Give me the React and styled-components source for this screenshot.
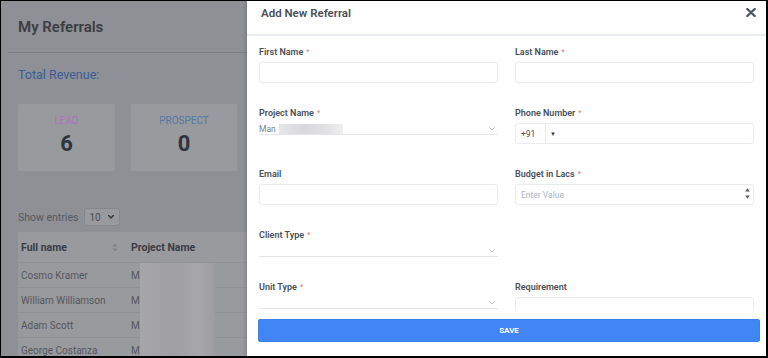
import React from "react";
import styled, { createGlobalStyle } from "styled-components";

const GlobalStyle = createGlobalStyle`
  html, body {
    margin: 0;
    padding: 0;
    background: #ffffff;
  }
  body {
    font-family: Roboto, "Noto Sans", "Liberation Sans", sans-serif;
  }
  * {
    box-sizing: border-box;
  }
`;

const Frame = styled.div`
  position: relative;
  width: 768px;
  height: 358px;
  border-style: solid;
  border-color: #000;
  border-width: 1px 2px 2px 1px;
  overflow: hidden;
`;

/* dimmed page behind the drawer */
const Page = styled.div`
  height: 100%;
  background: #8e9096;
  padding-left: 7px;
`;

const PageHeader = styled.div`
  height: 52px;
  display: flex;
  align-items: center;
  padding-left: 10px;
  border-bottom: 1px solid #7a7c81;
`;

const PageTitle = styled.h1`
  margin: 0;
  font-size: 15px;
  font-weight: 600;
  color: #3a3d44;
`;

const PageBody = styled.div`
  padding: 14px 0 0 10px;
`;

const Revenue = styled.div`
  font-size: 12.5px;
  color: #3b5c98;
  line-height: 16px;
`;

const Cards = styled.div`
  display: grid;
  grid-template-columns: 97px 106px;
  column-gap: 16px;
  margin-top: 21px;
`;

const Card = styled.div`
  height: 67px;
  background: #999a9e;
  border-radius: 2px;
  display: flex;
  flex-direction: column;
  align-items: center;
  padding-top: 11px;
`;

const CardLabel = styled.div`
  font-size: 10px;
  line-height: 12px;
  color: ${(p) => p.$color};
`;

const CardValue = styled.div`
  font-size: 22px;
  font-weight: 700;
  line-height: 26px;
  margin-top: 4px;
  color: #2e343d;
`;

const EntriesRow = styled.div`
  display: flex;
  align-items: center;
  gap: 6px;
  margin-top: 37px;
  font-size: 10.5px;
  color: #55585e;
`;

const EntriesSelect = styled.div`
  width: 36px;
  height: 18px;
  border: 1px solid #85878c;
  border-radius: 3px;
  background: #999a9e;
  display: flex;
  align-items: center;
  justify-content: space-between;
  padding: 0 5px 0 4px;
  font-size: 10px;
  color: #4a4d53;
`;

const Table = styled.div`
  margin-top: 6px;
  background: #999a9e;
`;

const TableRow = styled.div`
  display: grid;
  grid-template-columns: 110px 1fr;
  height: ${(p) => (p.$head ? "31px" : "25px")};
  align-items: center;
  border-bottom: 1px solid #909195;
  font-size: ${(p) => (p.$head ? "10.5px" : "10px")};
  font-weight: ${(p) => (p.$head ? 700 : 400)};
  color: ${(p) => (p.$head ? "#3a3d44" : "#54575d")};
`;

const Cell = styled.div`
  display: flex;
  align-items: center;
  justify-content: space-between;
  padding: 0 0 0 3px;
  white-space: nowrap;
  height: 100%;
`;

const CellText = styled.span`
  display: flex;
  align-items: center;
`;

const Redacted = styled.span`
  display: inline-block;
  width: ${(p) => p.$w}px;
  height: ${(p) => p.$h}px;
  margin-left: ${(p) => p.$ml || 0}px;
  background: ${(p) =>
    p.$light
      ? "linear-gradient(90deg, #e6e6e8, #d9d9db 40%, #e2e2e4 75%, #efeff0)"
      : "linear-gradient(90deg, #a6a6a9, #a0a0a3 45%, #a7a7aa 80%, #9d9da1)"};
`;

/* drawer */
const Drawer = styled.aside`
  position: absolute;
  top: 0;
  right: 0;
  bottom: 0;
  width: 519px;
  background: #ffffff;
  display: flex;
  flex-direction: column;
  box-shadow: -2px 0 3px rgba(0, 0, 0, 0.12);
`;

const DrawerHeader = styled.div`
  height: 35px;
  flex: none;
  display: flex;
  align-items: flex-start;
  justify-content: space-between;
  padding: 5px 10px 0 14px;
  border-bottom: 2px solid #e8ebef;
`;

const DrawerTitle = styled.h2`
  margin: 0;
  font-size: 11.5px;
  line-height: 14px;
  font-weight: 600;
  color: #495057;
`;

const CloseButton = styled.button`
  border: none;
  background: none;
  padding: 0;
  margin-top: 2px;
  display: flex;
  cursor: pointer;
`;

const DrawerBody = styled.div`
  flex: 1;
  overflow: hidden;
  padding: 10px 12px 0 12px;
`;

const FormGrid = styled.div`
  display: grid;
  grid-template-columns: 1fr 1fr;
  column-gap: 17px;
  row-gap: 24px;
  align-items: start;
`;

const Group = styled.div`
  display: flex;
  flex-direction: column;
`;

const Label = styled.label`
  font-size: 9px;
  line-height: 12px;
  font-weight: 600;
  color: #495057;
  margin-bottom: 4px;
`;

const Req = styled.span`
  color: #f07d72;
  font-size: 7px;
  margin-left: 3px;
  vertical-align: 1px;
`;

const Input = styled.div`
  height: ${(p) => p.$h || 21}px;
  border: 1px solid #e9ebec;
  border-radius: 3px;
  display: flex;
  align-items: center;
  font-size: 8.5px;
  color: #495057;
  position: relative;
`;

const Placeholder = styled.span`
  color: #adb5bd;
  padding-left: 5px;
`;

const SelectLine = styled.div`
  height: 12px;
  border-bottom: 1px solid #e3e6e9;
  display: flex;
  align-items: center;
  justify-content: space-between;
  padding-right: 3px;
  font-size: 8.5px;
  color: #7b8289;
`;

const PhoneCode = styled.div`
  width: 30px;
  height: 100%;
  display: flex;
  align-items: center;
  padding-left: 5px;
  border-right: 1px solid #e9ebec;
`;

const Caret = styled.span`
  margin-left: 4px;
  font-size: 6px;
  color: #343a40;
`;

const Spinner = styled.span`
  position: absolute;
  right: 3px;
  top: 3px;
  display: flex;
  flex-direction: column;
  gap: 3px;
`;

const DrawerFooter = styled.div`
  flex: none;
  padding: 8px 6px 14px 11px;
`;

const SaveButton = styled.button`
  width: 100%;
  height: 23px;
  border: 1px solid #3f7fe8;
  border-radius: 2px;
  background: #4285f4;
  color: #ffffff;
  font-family: Roboto, "Liberation Sans", sans-serif;
  font-size: 8px;
  font-weight: 700;
  cursor: pointer;
`;

const SortIcon = () => (
  <svg width="6" height="9" viewBox="0 0 6 9" style={{ marginRight: 10 }}>
    <path d="M3 0.5 L5.5 3.5 H0.5 Z" fill="#808287" />
    <path d="M3 8.5 L5.5 5.5 H0.5 Z" fill="#808287" />
  </svg>
);

const Chevron = ({ color = "#b3b8bd", w = 6, bold }) => (
  <svg width={w} height={w * 0.6} viewBox="0 0 6 3.6">
    <polyline
      points="0.6,0.6 3,3 5.4,0.6"
      fill="none"
      stroke={color}
      strokeWidth={bold ? 1.4 : 0.8}
      strokeLinecap="round"
      strokeLinejoin="round"
    />
  </svg>
);

const people = [
  "Cosmo Kramer",
  "William Williamson",
  "Adam Scott",
  "George Costanza",
];

const App = () => {
  return (
    <>
      <GlobalStyle />
      <Frame>
        <Page>
          <PageHeader>
            <PageTitle>My Referrals</PageTitle>
          </PageHeader>
          <PageBody>
            <Revenue>Total Revenue:</Revenue>
            <Cards>
              <Card>
                <CardLabel $color="#b86fc0">LEAD</CardLabel>
                <CardValue>6</CardValue>
              </Card>
              <Card>
                <CardLabel $color="#4f78a6">PROSPECT</CardLabel>
                <CardValue>0</CardValue>
              </Card>
            </Cards>
            <EntriesRow>
              Show entries
              <EntriesSelect>
                10
                <Chevron color="#33363c" w={6} bold />
              </EntriesSelect>
            </EntriesRow>
            <Table>
              <TableRow $head>
                <Cell>
                  Full name
                  <SortIcon />
                </Cell>
                <Cell>Project Name</Cell>
              </TableRow>
              {people.map((name, i) => (
                <TableRow key={i}>
                  <Cell>{name}</Cell>
                  <Cell>
                    <CellText>
                      M
                      <Redacted $w={75} $h={25} />
                    </CellText>
                  </Cell>
                </TableRow>
              ))}
            </Table>
          </PageBody>
        </Page>

        <Drawer>
          <DrawerHeader>
            <DrawerTitle>Add New Referral</DrawerTitle>
            <CloseButton aria-label="close">
              <svg width="10" height="9" viewBox="0 0 10 9">
                <path
                  d="M1.3 1 L8.7 8 M8.7 1 L1.3 8"
                  stroke="#4b5563"
                  strokeWidth="2.3"
                  strokeLinecap="round"
                />
              </svg>
            </CloseButton>
          </DrawerHeader>

          <DrawerBody>
            <FormGrid>
              <Group>
                <Label>
                  First Name<Req>*</Req>
                </Label>
                <Input />
              </Group>
              <Group>
                <Label>
                  Last Name<Req>*</Req>
                </Label>
                <Input />
              </Group>

              <Group>
                <Label>
                  Project Name<Req>*</Req>
                </Label>
                <SelectLine>
                  <CellText>
                    Man
                    <Redacted $light $w={64} $h={10} $ml={3} />
                  </CellText>
                  <Chevron />
                </SelectLine>
              </Group>
              <Group>
                <Label>
                  Phone Number<Req>*</Req>
                </Label>
                <Input>
                  <PhoneCode>+91</PhoneCode>
                  <Caret>▼</Caret>
                </Input>
              </Group>

              <Group>
                <Label>Email</Label>
                <Input />
              </Group>
              <Group>
                <Label>
                  Budget in Lacs<Req>*</Req>
                </Label>
                <Input>
                  <Placeholder>Enter Value</Placeholder>
                  <Spinner>
                    <svg width="5" height="4" viewBox="0 0 5 4">
                      <path d="M2.5 0.3 L4.8 3.6 H0.2 Z" fill="#555b62" />
                    </svg>
                    <svg width="5" height="4" viewBox="0 0 5 4">
                      <path d="M2.5 3.7 L4.8 0.4 H0.2 Z" fill="#555b62" />
                    </svg>
                  </Spinner>
                </Input>
              </Group>

              <Group>
                <Label>
                  Client Type<Req>*</Req>
                </Label>
                <SelectLine>
                  <span />
                  <Chevron />
                </SelectLine>
              </Group>
              <div />

              <Group>
                <Label>
                  Unit Type<Req>*</Req>
                </Label>
                <SelectLine>
                  <span />
                  <Chevron />
                </SelectLine>
              </Group>
              <Group>
                <Label>Requirement</Label>
                <Input $h={40} />
              </Group>
            </FormGrid>
          </DrawerBody>

          <DrawerFooter>
            <SaveButton>SAVE</SaveButton>
          </DrawerFooter>
        </Drawer>
      </Frame>
    </>
  );
};

export default App;
